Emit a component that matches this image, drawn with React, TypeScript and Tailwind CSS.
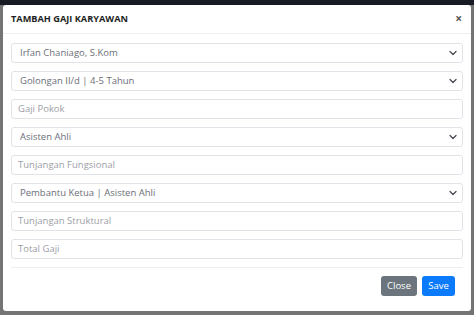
type Field = { kind: 'select' | 'input'; text: string }

const fields: Field[] = [
  { kind: 'select', text: 'Irfan Chaniago, S.Kom' },
  { kind: 'select', text: 'Golongan II/d | 4-5 Tahun' },
  { kind: 'input', text: 'Gaji Pokok' },
  { kind: 'select', text: 'Asisten Ahli' },
  { kind: 'input', text: 'Tunjangan Fungsional' },
  { kind: 'select', text: 'Pembantu Ketua | Asisten Ahli' },
  { kind: 'input', text: 'Tunjangan Struktural' },
  { kind: 'input', text: 'Total Gaji' },
]

function Chevron() {
  return (
    <svg width="8" height="6" viewBox="0 0 8 6" fill="none" className="text-[#4a4d55]">
      <polyline points="1,1.5 4,4.5 7,1.5" stroke="currentColor" strokeWidth="1.3" strokeLinecap="round" strokeLinejoin="round" />
    </svg>
  )
}

function FormField({ kind, text }: Field) {
  if (kind === 'select') {
    return (
      <div className="flex h-[20px] items-center justify-between rounded-[3px] border border-[#e1e3e8] bg-white pl-[8px] pr-[5px] text-[9.5px] text-[#6b6e78]">
        <span>{text}</span>
        <Chevron />
      </div>
    )
  }
  return (
    <div className="flex h-[20px] items-center rounded-[3px] border border-[#e1e3e8] bg-white pl-[6px] text-[9.5px] text-[#9c9ea6]">
      {text}
    </div>
  )
}

export default function App() {
  return (
    <div className="h-[315px] w-[474px] overflow-hidden bg-[linear-gradient(to_bottom,#161b24_0,#161b24_5px,#747474_5px)] px-[3px] pt-[5px] font-['Open_Sans',sans-serif]">
      <div className="flex h-[306px] flex-col rounded-[3px] bg-white">
        <div className="flex h-[29px] items-center justify-between border-b border-[#eceef1] pl-[8px] pr-[9px]">
          <span className="text-[9.2px] font-bold text-[#1d1f24]">TAMBAH GAJI KARYAWAN</span>
          <span className="text-[12px] font-bold leading-none text-[#555]">×</span>
        </div>
        <div className="flex flex-col gap-[8px] px-[8px] pb-[8px] pt-[9px]">
          {fields.map(f => (
            <FormField key={f.text} {...f} />
          ))}
        </div>
        <div className="mx-[8px] flex justify-end gap-[5px] border-t border-[#eceef1] pr-[8px] pt-[8px]">
          <button className="h-[20px] w-[36px] rounded-[3px] bg-[#6c757d] text-[9.5px] text-white">Close</button>
          <button className="h-[20px] w-[33px] rounded-[3px] bg-[#0b7bfb] text-[9.5px] text-white">Save</button>
        </div>
      </div>
    </div>
  )
}
